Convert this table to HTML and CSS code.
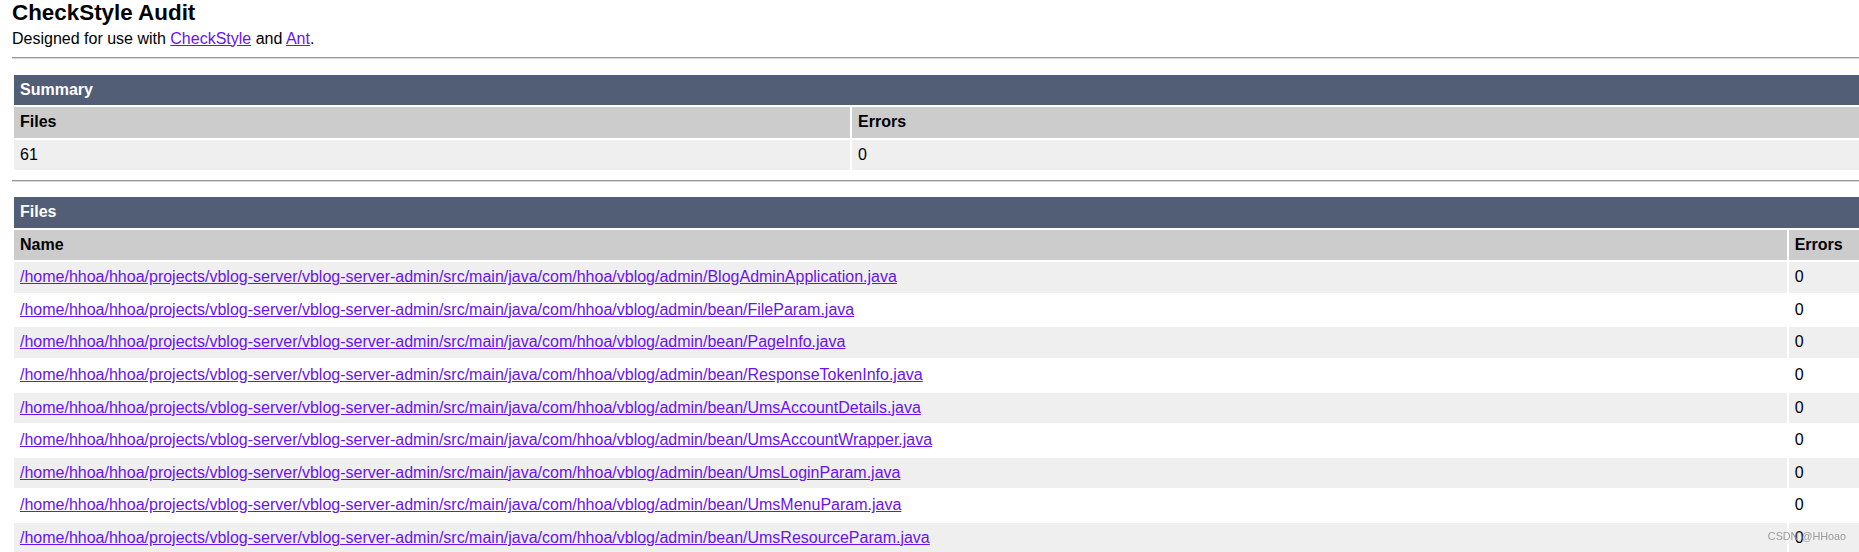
FILE: index.html
```html
<!DOCTYPE html>
<html>
<head>
<meta charset="utf-8">
<title>CheckStyle Audit</title>
<link rel="stylesheet" href="styles.css">
</head>
<body>
<div class="page">
  <header class="masthead">
    <h2 class="title">CheckStyle Audit</h2>
    <div class="subtitle">Designed for use with <a href="#">CheckStyle</a> and <a href="#">Ant</a>.</div>
  </header>
  <hr class="rule">

  <h3 class="section">Summary</h3>
  <table class="log summary">
    <colgroup><col class="c-files"><col></colgroup>
    <tr><th>Files</th><th>Errors</th></tr>
    <tr class="a"><td>61</td><td>0</td></tr>
  </table>
  <hr class="rule rule-tight">

  <h3 class="section">Files</h3>
  <table class="log files">
    <colgroup><col class="c-name"><col></colgroup>
    <tr><th>Name</th><th>Errors</th></tr>
    <tr class="a"><td><a href="#">/home/hhoa/hhoa/projects/vblog-server/vblog-server-admin/src/main/java/com/hhoa/vblog/admin/BlogAdminApplication.java</a></td><td>0</td></tr>
    <tr class="b"><td><a href="#">/home/hhoa/hhoa/projects/vblog-server/vblog-server-admin/src/main/java/com/hhoa/vblog/admin/bean/FileParam.java</a></td><td>0</td></tr>
    <tr class="a"><td><a href="#">/home/hhoa/hhoa/projects/vblog-server/vblog-server-admin/src/main/java/com/hhoa/vblog/admin/bean/PageInfo.java</a></td><td>0</td></tr>
    <tr class="b"><td><a href="#">/home/hhoa/hhoa/projects/vblog-server/vblog-server-admin/src/main/java/com/hhoa/vblog/admin/bean/ResponseTokenInfo.java</a></td><td>0</td></tr>
    <tr class="a"><td><a href="#">/home/hhoa/hhoa/projects/vblog-server/vblog-server-admin/src/main/java/com/hhoa/vblog/admin/bean/UmsAccountDetails.java</a></td><td>0</td></tr>
    <tr class="b"><td><a href="#">/home/hhoa/hhoa/projects/vblog-server/vblog-server-admin/src/main/java/com/hhoa/vblog/admin/bean/UmsAccountWrapper.java</a></td><td>0</td></tr>
    <tr class="a"><td><a href="#">/home/hhoa/hhoa/projects/vblog-server/vblog-server-admin/src/main/java/com/hhoa/vblog/admin/bean/UmsLoginParam.java</a></td><td>0</td></tr>
    <tr class="b"><td><a href="#">/home/hhoa/hhoa/projects/vblog-server/vblog-server-admin/src/main/java/com/hhoa/vblog/admin/bean/UmsMenuParam.java</a></td><td>0</td></tr>
    <tr class="a"><td><a href="#">/home/hhoa/hhoa/projects/vblog-server/vblog-server-admin/src/main/java/com/hhoa/vblog/admin/bean/UmsResourceParam.java</a></td><td>0</td></tr>
    <tr class="b"><td><a href="#">/home/hhoa/hhoa/projects/vblog-server/vblog-server-admin/src/main/java/com/hhoa/vblog/admin/bean/UmsRoleParam.java</a></td><td>0</td></tr>
  </table>
</div>
<div class="watermark">CSDN @HHoao</div>
</body>
</html>
```

FILE: styles.css
```css
html {
  overflow: hidden;
}
body {
  margin: 0;
  background: #ffffff;
  color: #000000;
  font-family: "Liberation Sans", Arial, Helvetica, sans-serif;
  font-size: 16px;
}
.page {
  width: 1866px;
  padding-left: 12px;
}
.masthead {
  display: flex;
  flex-direction: column;
  padding-bottom: 1.5px;
}
.title {
  margin: 0 0 3.6px 0;
  font-size: 22.4px;
  font-weight: bold;
}
.subtitle a,
.files a {
  color: #6a12f0;
  text-decoration: underline;
}
.rule {
  margin: 8px 0 15.5px 0;
  height: 0;
  border: 0;
  border-top: 1px solid #9a9a9a;
  border-bottom: 1px solid #d6d6d6;
}
.rule-tight {
  margin-top: 7.5px;
  margin-bottom: 15.5px;
}
.section {
  margin: 0 2px;
  padding: 6px;
  background: #525d76;
  color: #ffffff;
  font-size: 16px;
  line-height: 18.4px;
  font-weight: bold;
}
.log {
  width: 100%;
  table-layout: fixed;
  border-collapse: separate;
  border-spacing: 2px;
  font-size: 16px;
  line-height: 18.6px;
}
.log th,
.log td {
  padding: 6px;
  text-align: left;
  vertical-align: top;
  white-space: nowrap;
}
.log th {
  background: #cccccc;
  font-weight: bold;
  color: #000000;
}
.log tr.a td {
  background: #efefef;
}
.log tr.b td {
  background: #ffffff;
}
.c-files {
  width: 836px;
}
.c-name {
  width: 1772.7px;
}
.watermark {
  position: fixed;
  right: 13px;
  bottom: 10px;
  font-family: "Liberation Sans", Arial, sans-serif;
  font-size: 10.8px;
  color: rgba(140, 140, 140, 0.85);
}
```
